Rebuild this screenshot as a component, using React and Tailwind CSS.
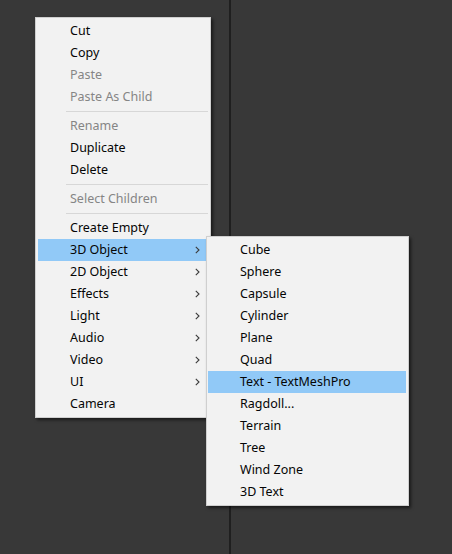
import React from "react";

const mainItems = [
  { label: "Cut" },
  { label: "Copy" },
  { label: "Paste", disabled: true },
  { label: "Paste As Child", disabled: true },
  { sep: true },
  { label: "Rename", disabled: true },
  { label: "Duplicate" },
  { label: "Delete" },
  { sep: true },
  { label: "Select Children", disabled: true },
  { sep: true },
  { label: "Create Empty" },
  { label: "3D Object", sub: true, active: true },
  { label: "2D Object", sub: true },
  { label: "Effects", sub: true },
  { label: "Light", sub: true },
  { label: "Audio", sub: true },
  { label: "Video", sub: true },
  { label: "UI", sub: true },
  { label: "Camera" },
];

const subItems = [
  { label: "Cube" },
  { label: "Sphere" },
  { label: "Capsule" },
  { label: "Cylinder" },
  { label: "Plane" },
  { label: "Quad" },
  { label: "Text - TextMeshPro", active: true },
  { label: "Ragdoll..." },
  { label: "Terrain" },
  { label: "Tree" },
  { label: "Wind Zone" },
  { label: "3D Text" },
];

function Chevron() {
  return (
    <svg width="5" height="8" viewBox="0 0 5 8" className="mr-[8px] shrink-0">
      <polyline points="0.8,0.8 4,4 0.8,7.2" fill="none" stroke="#3c3c3c" strokeWidth="1.1" />
    </svg>
  );
}

function Item({ item }) {
  if (item.sep) {
    return (
      <div className="h-[7px] flex items-center">
        <div className="ml-[28px] h-px flex-1 bg-[#d7d7d7]" />
      </div>
    );
  }
  return (
    <div
      className={`h-[22px] flex items-center justify-between pl-8 ${
        item.active ? "bg-[#91c9f7]" : ""
      } ${item.disabled ? "text-[#858585]" : "text-[#050505]"}`}
    >
      <span className="leading-none whitespace-nowrap">{item.label}</span>
      {item.sub && <Chevron />}
    </div>
  );
}

export default function App() {
  return (
    <div
      className="relative w-[452px] h-[554px] bg-[#383838] flex overflow-hidden text-[12.5px]"
      style={{ fontFamily: '"Noto Sans", "Open Sans", sans-serif' }}
    >
      <div className="w-[229px] h-full" />
      <div className="w-[2px] h-full bg-[#1f1f1f]" />
      <div className="flex-1 h-full" />

      <div className="absolute left-[35px] top-[17px] w-[176px] bg-[#f2f2f2] border border-[#cfcfcf] py-[2px] px-[2px] shadow-[2px_2px_3px_rgba(0,0,0,0.55)]">
        {mainItems.map((it, i) => (
          <Item key={i} item={it} />
        ))}
      </div>

      <div className="absolute left-[206px] top-[236px] w-[203px] bg-[#f2f2f2] border border-[#cfcfcf] py-[2px] pl-[1px] pr-[2px] shadow-[2px_2px_3px_rgba(0,0,0,0.55)]">
        {subItems.map((it, i) => (
          <Item key={i} item={it} />
        ))}
      </div>
    </div>
  );
}
